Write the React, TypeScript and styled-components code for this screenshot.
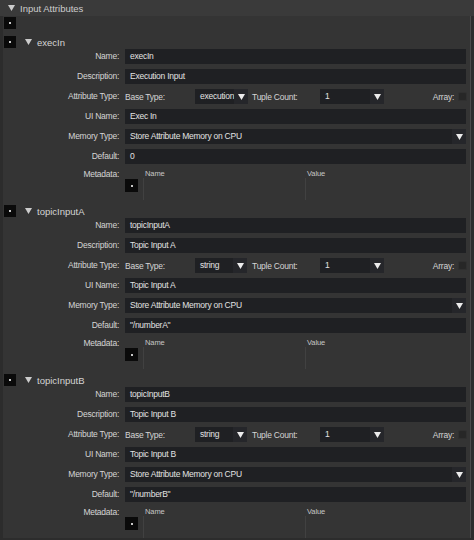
import React from 'react';
import styled, { createGlobalStyle } from 'styled-components';

const Global = createGlobalStyle`
  html, body { margin: 0; padding: 0; background: #2c2c2c; }
  body { font-family: "Liberation Sans", Arial, sans-serif; -webkit-font-smoothing: antialiased; }
`;

const Frame = styled.div`
  width: 474px;
  height: 540px;
  overflow: hidden;
  background: #2c2c2c;
  display: flex;
  flex-direction: column;
`;

const Header = styled.div`
  height: 16px;
  flex: none;
  display: flex;
  align-items: center;
  gap: 5px;
  padding-left: 8px;
  background: #3a3a3a;
  color: #cdcdcd;
  font-size: 9.5px;
`;

const Body = styled.div`
  flex: 1;
  margin: 0 3px 2px 3px;
  padding: 1px 4px 0 1px;
  background: #343434;
  border-right: 1px solid #4a4a4a;
  display: flex;
  flex-direction: column;
  gap: 7px;
  overflow: hidden;
`;

const Sections = styled.div`
  display: flex;
  flex-direction: column;
  gap: 5px;
`;

const Square = styled.div<{ $size?: number }>`
  width: ${p => p.$size ?? 12}px;
  height: ${p => p.$size ?? 12}px;
  flex: none;
  background: #0a0a0a;
  display: flex;
  align-items: center;
  justify-content: center;
  &::after {
    content: '';
    width: 2px;
    height: 2px;
    background: #c8c8c8;
  }
`;

const Tri = ({ w = 7, h = 6, color = '#cccccc' }: { w?: number; h?: number; color?: string }) => (
  <svg width={w} height={h} viewBox={`0 0 ${w} ${h}`} style={{ display: 'block', flex: 'none' }}>
    <polygon points={`0,0 ${w},0 ${w / 2},${h}`} fill={color} />
  </svg>
);

const SectionHead = styled.div`
  height: 12px;
  display: flex;
  align-items: center;
  color: #d4d4d4;
  font-size: 9.5px;
`;

const TriSlot = styled.span`
  margin-left: 9px;
  margin-right: 5px;
  display: flex;
`;

const Grid = styled.div`
  margin-top: 1px;
  display: grid;
  grid-template-columns: 115px 1fr;
  column-gap: 6px;
  row-gap: 5px;
`;

const Label = styled.div<{ $top?: boolean }>`
  text-align: right;
  color: #d4d4d4;
  font-size: 8.5px;
  letter-spacing: -0.25px;
  line-height: ${p => (p.$top ? '10px' : '15px')};
  white-space: nowrap;
`;

const Field = styled.div`
  height: 15px;
  background: #1f2023;
  color: #e2e2e2;
  font-size: 8.5px;
  letter-spacing: -0.25px;
  line-height: 15px;
  padding-left: 5px;
  white-space: nowrap;
  overflow: hidden;
`;

const TypeRow = styled.div`
  display: flex;
  align-items: center;
  height: 15px;
  font-size: 8.5px;
  letter-spacing: -0.25px;
  color: #d4d4d4;
`;

const InlineLabel = styled.span<{ $w: number; $ml?: number }>`
  width: ${p => p.$w}px;
  margin-left: ${p => p.$ml ?? 0}px;
  flex: none;
  white-space: nowrap;
`;

const Combo = styled.div<{ $w?: number }>`
  ${p => (p.$w ? `width: ${p.$w}px; flex: none;` : 'flex: 1;')}
  height: 15px;
  display: flex;
  background: #1f2023;
  color: #e2e2e2;
  font-size: 8.5px;
  letter-spacing: -0.25px;
  line-height: 15px;
`;

const ComboText = styled.span`
  flex: 1;
  padding-left: 5px;
  white-space: nowrap;
  overflow: visible;
`;

const ComboArrow = styled.span`
  width: 14px;
  flex: none;
  display: flex;
  align-items: center;
  justify-content: center;
  background: #25262a;
`;

const ArrayGroup = styled.div`
  margin-left: auto;
  display: flex;
  align-items: center;
  gap: 4px;
`;

const Check = styled.div`
  width: 9px;
  height: 9px;
  margin-right: -1px;
  background: #272727;
  border: 1px solid #303030;
  border-radius: 2px;
  box-sizing: border-box;
`;

const MetaRow = styled.div`
  grid-column: 1 / -1;
  display: grid;
  grid-template-columns: 115px 1fr;
  column-gap: 6px;
  height: 31px;
`;

const MetaTable = styled.div`
  display: grid;
  grid-template-columns: 18px 162px 1fr;
  grid-template-rows: 9px 22px;
`;

const ColHead = styled.div<{ $col: number }>`
  grid-row: 1;
  grid-column: ${p => p.$col};
  color: #c6c6c6;
  font-size: 7.5px;
  line-height: 9px;
  padding-left: 2px;
  letter-spacing: -0.1px;
`;

const ColCell = styled.div<{ $col: number }>`
  grid-row: 2;
  grid-column: ${p => p.$col};
  border-left: 1px solid #414141;
`;

const BtnCell = styled.div`
  grid-row: 2;
  grid-column: 1;
  padding-top: 1px;
`;

type Attr = { name: string; desc: string; base: string; ui: string; def: string };

const attrs: Attr[] = [
  { name: 'execIn', desc: 'Execution Input', base: 'execution', ui: 'Exec In', def: '0' },
  { name: 'topicInputA', desc: 'Topic Input A', base: 'string', ui: 'Topic Input A', def: '"/numberA"' },
  { name: 'topicInputB', desc: 'Topic Input B', base: 'string', ui: 'Topic Input B', def: '"/numberB"' },
];

const Arrow = () => (
  <ComboArrow>
    <Tri w={7} h={6} color="#ececec" />
  </ComboArrow>
);

const Section = ({ a }: { a: Attr }) => (
  <div>
    <SectionHead>
      <Square />
      <TriSlot>
        <Tri />
      </TriSlot>
      {a.name}
    </SectionHead>
    <Grid>
      <Label>Name:</Label>
      <Field>{a.name}</Field>
      <Label>Description:</Label>
      <Field>{a.desc}</Field>
      <Label>Attribute Type:</Label>
      <TypeRow>
        <InlineLabel $w={70}>Base Type:</InlineLabel>
        <Combo $w={52}>
          <ComboText>{a.base}</ComboText>
          <Arrow />
        </Combo>
        <InlineLabel $w={68} $ml={5}>Tuple Count:</InlineLabel>
        <Combo $w={64}>
          <ComboText>1</ComboText>
          <Arrow />
        </Combo>
        <ArrayGroup>
          Array:
          <Check />
        </ArrayGroup>
      </TypeRow>
      <Label>UI Name:</Label>
      <Field>{a.ui}</Field>
      <Label>Memory Type:</Label>
      <Combo>
        <ComboText>Store Attribute Memory on CPU</ComboText>
        <Arrow />
      </Combo>
      <Label>Default:</Label>
      <Field>{a.def}</Field>
      <MetaRow>
        <Label $top>Metadata:</Label>
        <MetaTable>
          <ColHead $col={2}>Name</ColHead>
          <ColHead $col={3}>Value</ColHead>
          <BtnCell>
            <Square $size={13} />
          </BtnCell>
          <ColCell $col={2} />
          <ColCell $col={3} />
        </MetaTable>
      </MetaRow>
    </Grid>
  </div>
);

export default function App() {
  return (
    <>
      <Global />
      <Frame>
        <Header>
          <Tri />
          Input Attributes
        </Header>
        <Body>
          <Square />
          <Sections>
            {attrs.map(a => (
              <Section key={a.name} a={a} />
            ))}
          </Sections>
        </Body>
      </Frame>
    </>
  );
}
